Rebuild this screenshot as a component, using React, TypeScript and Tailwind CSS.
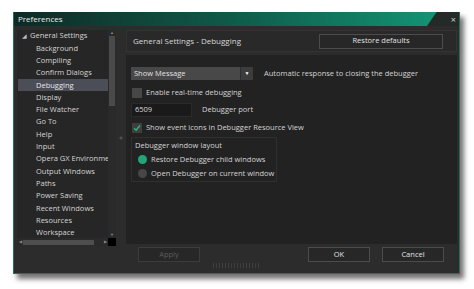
import React from "react";

const treeItems = [
  "Background",
  "Compiling",
  "Confirm Dialogs",
  "Debugging",
  "Display",
  "File Watcher",
  "Go To",
  "Help",
  "Input",
  "Opera GX Environment",
  "Output Windows",
  "Paths",
  "Power Saving",
  "Recent Windows",
  "Resources",
  "Workspace",
];

function Button({ label, className = "", disabled = false }: { label: string; className?: string; disabled?: boolean }) {
  return (
    <div
      className={
        "h-[15px] flex items-center justify-center border bg-[#272727] " +
        (disabled ? "border-[#3c3c3c] text-[#5c5c5c] " : "border-[#4c4c4c] text-[#e2e2e2] ") +
        className
      }
    >
      {label}
    </div>
  );
}

export default function App() {
  return (
    <div className="w-[474px] h-[289px] bg-white pt-[12px] pl-[13px] font-['Open_Sans',sans-serif] text-[7.5px] leading-none text-[#d4d4d4]">
      <div className="w-[447px] h-[262px] flex flex-col bg-[#2c2c2c] border border-[#2d6b58] border-t-0 shadow-[4px_5px_5px_rgba(0,0,0,0.55)]">
        {/* Title bar */}
        <div className="h-[14px] flex items-stretch bg-gradient-to-r from-[#0d2a25] via-[#0f5c4b] to-[#139a78]">
          <div className="flex-1 flex items-center pl-[4px] text-[8px] text-[#ececec]">Preferences</div>
          <div className="w-[32px] bg-[#232a28] [clip-path:polygon(30%_0,100%_0,100%_100%,0_100%)] flex items-center justify-end pr-[3px] text-[9px] text-[#cfcfcf]">
            ×
          </div>
        </div>

        {/* Main area */}
        <div className="flex h-[218px] pt-[4px] pl-[3px] pr-[2px]">
          {/* Tree panel */}
          <div className="w-[99px] h-[216px] bg-[#262626] flex flex-col">
            <div className="flex flex-1 min-h-0">
              <div className="flex-1 overflow-hidden pl-[1px]">
                <div className="h-[12.3px] flex items-center pl-[4px] whitespace-nowrap">
                  <span className="text-[6px] text-[#bdbdbd] mr-[3px]">◢</span>
                  General Settings
                </div>
                {treeItems.map((t) => (
                  <div
                    key={t}
                    className={
                      "h-[12.3px] flex items-center pl-[18px] whitespace-nowrap " +
                      (t === "Debugging" ? "bg-[#4b4e57] text-[#e6e6e6]" : "")
                    }
                  >
                    {t}
                  </div>
                ))}
              </div>
              {/* Vertical scrollbar */}
              <div className="w-[8px] bg-[#2a2a2a] flex flex-col items-center">
                <div className="h-[6px] flex items-center text-[4px] text-[#8a8a8a]">▲</div>
                <div className="w-[6px] h-[70px] bg-[#4a4a4a]" />
                <div className="flex-1" />
                <div className="h-[6px] flex items-center text-[4px] text-[#8a8a8a]">▼</div>
              </div>
            </div>
            {/* Horizontal scrollbar */}
            <div className="h-[8px] flex">
              <div className="flex-1 bg-[#2a2a2a] flex items-center">
                <div className="w-[6px] flex justify-center text-[4px] text-[#8a8a8a]">◀</div>
                <div className="w-[71px] h-[5px] bg-[#4e4e4e]" />
                <div className="flex-1" />
                <div className="w-[6px] flex justify-center text-[4px] text-[#8a8a8a]">▶</div>
              </div>
              <div className="w-[8px] bg-black" />
            </div>
          </div>

          {/* Gutter */}
          <div className="w-[10px] flex items-center justify-center text-[7px] text-[#7a7a7a]">«</div>

          {/* Right side */}
          <div className="flex-1 flex flex-col gap-[3px]">
            <div className="h-[22px] bg-[#292929] border border-[#333] flex items-center pl-[6px] pr-[13px]">
              <div className="flex-1 text-[8px] text-[#d8d8d8]">General Settings - Debugging</div>
              <Button label="Restore defaults" className="w-[124px]" />
            </div>
            <div className="flex-1 bg-[#222222] pl-[5px] pt-[12px]">
              {/* Dropdown row */}
              <div className="flex items-center h-[13px]">
                <div className="w-[122px] h-[13px] flex bg-[#484848]">
                  <div className="flex-1 flex items-center pl-[3px] text-[#e0e0e0]">Show Message</div>
                  <div className="w-[13px] bg-[#3c3c3c] border-l border-[#2e2e2e] flex items-center justify-center text-[5px] text-white">▼</div>
                </div>
                <div className="ml-[11px]">Automatic response to closing the debugger</div>
              </div>
              {/* Enable real-time */}
              <div className="flex items-center mt-[8px] h-[10px] pl-[1px]">
                <div className="w-[10px] h-[10px] bg-[#474747]" />
                <div className="ml-[4px]">Enable real-time debugging</div>
              </div>
              {/* Port */}
              <div className="flex items-center mt-[5px] h-[14px]">
                <div className="w-[61px] h-[14px] bg-[#1a1a1a] border border-[#2a2a2a] flex items-center pl-[3px] text-[#d8d8d8]">6509</div>
                <div className="ml-[10px]">Debugger port</div>
              </div>
              {/* Show event icons */}
              <div className="flex items-center mt-[6px] h-[10px] pl-[1px]">
                <div className="w-[10px] h-[10px] bg-[#3e3e3e] flex items-center justify-center">
                  <svg width="8" height="8" viewBox="0 0 8 8">
                    <path d="M1 4.2 L3.1 6.2 L7 1.6" stroke="#2fb37c" strokeWidth="1.5" fill="none" />
                  </svg>
                </div>
                <div className="ml-[4px]">Show event icons in Debugger Resource View</div>
              </div>
              {/* Group */}
              <div className="mt-[4px] w-[146px] h-[45px] border border-[#2f2f2f] pl-[3px] pt-[4px]">
                <div className="h-[8px] flex items-center">Debugger window layout</div>
                <div className="flex items-center mt-[5px] h-[9px] pl-[3px]">
                  <div className="w-[9px] h-[9px] rounded-full bg-[#22a577]" />
                  <div className="ml-[4px]">Restore Debugger child windows</div>
                </div>
                <div className="flex items-center mt-[5px] h-[9px] pl-[3px]">
                  <div className="w-[9px] h-[9px] rounded-full bg-[#474747]" />
                  <div className="ml-[4px]">Open Debugger on current window</div>
                </div>
              </div>
            </div>
          </div>
        </div>

        {/* Bottom bar */}
        <div className="flex-1 flex flex-col">
          <div className="flex items-center mt-[3px]">
            <Button label="Apply" disabled className="w-[62px] ml-[124px]" />
            <div className="flex-1" />
            <Button label="OK" className="w-[62px]" />
            <Button label="Cancel" className="w-[62px] ml-[12px] mr-[15px]" />
          </div>
          <div className="flex justify-center mt-[1px]">
            <div className="w-[48px] h-[5px] bg-[repeating-linear-gradient(90deg,#4a4a4a_0,#4a4a4a_1px,transparent_1px,transparent_3px)] opacity-60" />
          </div>
        </div>
      </div>
    </div>
  );
}
